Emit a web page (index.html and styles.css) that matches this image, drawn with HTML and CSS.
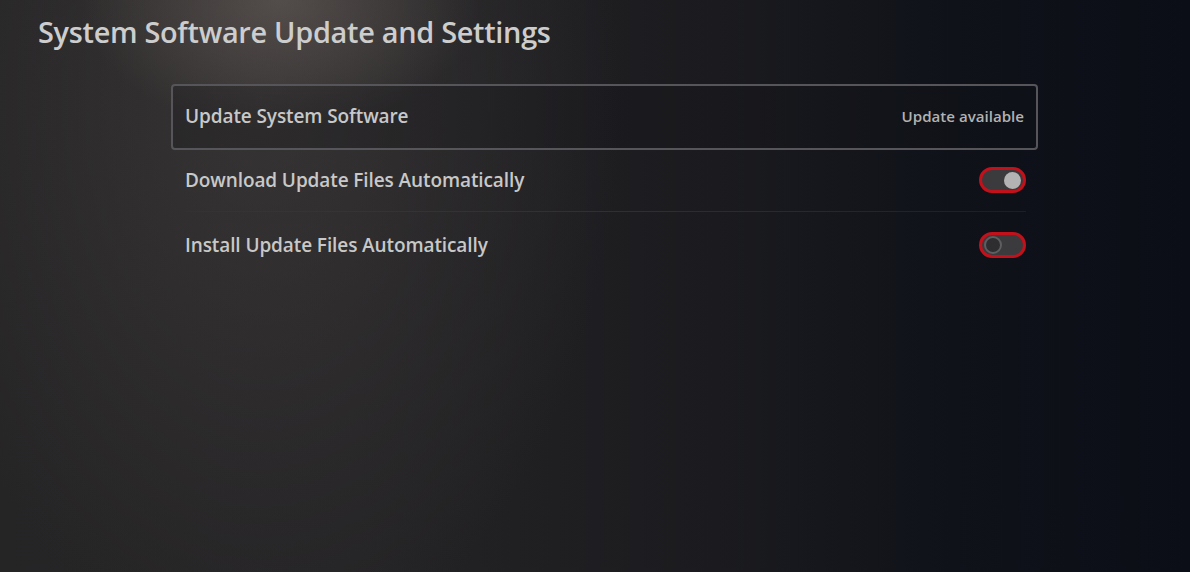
FILE: index.html
```html
<!DOCTYPE html>
<html lang="en">
<head>
<meta charset="utf-8">
<link rel="stylesheet" href="styles.css">
</head>
<body>
<div class="screen">
  <h1 class="title">System Software Update and Settings</h1>
  <div class="list">
    <div class="row row-focused">
      <span class="label">Update System Software</span>
      <span class="value">Update available</span>
    </div>
    <div class="row row-sep">
      <span class="label">Download Update Files Automatically</span>
      <span class="toggle toggle-on"><span class="knob"></span></span>
    </div>
    <div class="row">
      <span class="label">Install Update Files Automatically</span>
      <span class="toggle toggle-off"><span class="knob"></span></span>
    </div>
  </div>
</div>
</body>
</html>
```
FILE: styles.css
```css
html, body {
  margin: 0;
  padding: 0;
  width: 1190px;
  height: 572px;
  overflow: hidden;
}
body {
  font-family: "Open Sans", "Noto Sans", sans-serif;
  color: #c9c9c9;
  background:
    radial-gradient(ellipse 200px 130px at 280px 0px, rgba(115, 105, 100, 0.5), rgba(115, 105, 100, 0) 100%),
    radial-gradient(ellipse 360px 560px at 260px 100px, rgba(68, 64, 63, 0.55), rgba(68, 64, 63, 0) 100%),
    linear-gradient(90deg, #262526 0%, #242325 30%, #1b1b1f 60%, #0f1219 80%, #0b0e16 100%);
}
.screen {
  width: 1190px;
  height: 572px;
  box-sizing: border-box;
  padding-top: 14px;
}
.title {
  margin: 0 0 0 38px;
  font-size: 28.9px;
  font-weight: 600;
  line-height: 36px;
  letter-spacing: -0.3px;
  color: #cdcdcd;
}
.list {
  margin: 34px 0 0 171px;
  width: 867px;
  display: flex;
  flex-direction: column;
}
.row {
  height: 64px;
  display: flex;
  align-items: center;
  justify-content: space-between;
  padding: 0 10px 0 12px;
  box-sizing: border-box;
  position: relative;
  border: 2px solid transparent;
}
.row-focused {
  height: 66px;
  border: 2px solid #56565a;
  border-radius: 4px;
  background: rgba(20, 20, 24, 0.25);
  padding-bottom: 2px;
}
.row-sep {
  margin-top: -1px;
  padding-bottom: 2px;
}
.row-sep::after {
  content: "";
  position: absolute;
  left: 12px;
  right: 10px;
  bottom: -1px;
  height: 1px;
  background: linear-gradient(90deg, rgba(70,70,74,0.1), rgba(70,70,74,0.45) 50%, rgba(70,70,74,0.25));
}
.label {
  font-size: 19px;
  font-weight: 600;
  letter-spacing: -0.1px;
  color: #c8c8c8;
}
.value {
  font-size: 15.1px;
  font-weight: 600;
  color: #b2b2b2;
  margin-right: 2px;
}
.row-focused .value {
  margin-top: 0;
}
.toggle {
  width: 37px;
  height: 20px;
  border: 3px solid #c3111c;
  border-radius: 14px;
  background: #3b3a3c;
  display: flex;
  align-items: center;
  padding: 0 2px;
  box-sizing: content-box;
}
.knob {
  width: 17px;
  height: 17px;
  border-radius: 50%;
}
.toggle-on {
  justify-content: flex-end;
}
.toggle-on .knob {
  background: #b3b3b3;
}
.toggle-off {
  justify-content: flex-start;
}
.toggle-off .knob {
  background: #2e2d30;
  border: 2px solid #5e5d60;
  width: 14px;
  height: 14px;
}
```
